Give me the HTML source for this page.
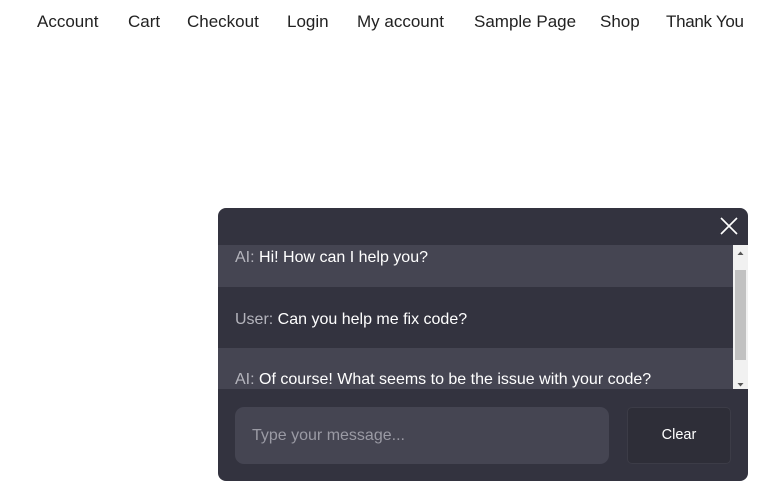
<!DOCTYPE html>
<html><head><style>
body{margin:0;width:768px;height:489px;background:#fff;position:relative;overflow:hidden;font-family:"Liberation Sans",sans-serif}
.n{position:absolute;top:12px;font-size:17px;color:#222;white-space:nowrap}
.p{position:absolute;left:218px;top:208px;width:530px;height:273px;background:#33333f;border-radius:8px;overflow:hidden}
.r{position:absolute;left:0;width:515px;font-size:16px;color:#fff;padding-left:17px;box-sizing:border-box}
.r span{color:#b4b4bc}
.sb{position:absolute;left:515px;top:37px;width:15px;height:144px;background:#f1f1f1}
.th{position:absolute;left:517px;top:62px;width:11px;height:90px;background:#c1c1c1}
</style></head><body>
<div class="n" style="left:37px">Account</div>
<div class="n" style="left:128px">Cart</div>
<div class="n" style="left:187px">Checkout</div>
<div class="n" style="left:287px">Login</div>
<div class="n" style="left:357px">My account</div>
<div class="n" style="left:474px">Sample Page</div>
<div class="n" style="left:600px">Shop</div>
<div class="n" style="left:666px;letter-spacing:-0.3px">Thank You</div>
<div class="p">
<svg style="position:absolute;left:502px;top:9px" width="18" height="18"><path d="M1 1L17 17M17 1L1 17" stroke="#fff" stroke-width="1.6"/></svg>
<div class="r" style="top:37px;height:42px;background:#454552;line-height:26px"><span>AI:</span> Hi! How can I help you?</div>
<div class="r" style="top:79px;height:61px;background:#33333f;line-height:66px"><span>User:</span> Can you help me fix code?</div>
<div class="r" style="top:140px;height:41px;background:#454552;line-height:64px;overflow:hidden"><span>AI:</span> Of course! What seems to be the issue with your code?</div>
<div class="sb"></div><div class="th"></div>
<svg style="position:absolute;left:518px;top:42px" width="9" height="140"><path d="M1.5 5L4.5 1.5 7.5 5Z" fill="#555"/><path d="M1.5 133L4.5 136.5 7.5 133Z" fill="#555"/></svg>
<div style="position:absolute;left:17px;top:199px;width:374px;height:57px;background:#454552;border-radius:9px;color:#9a9aa4;font-size:16px;line-height:57px;padding-left:17px;box-sizing:border-box">Type your message...</div>
<div style="position:absolute;left:409px;top:199px;width:104px;height:57px;background:#2e2e38;border:1px solid #3c3c47;border-radius:5px;box-sizing:border-box;color:#fff;font-size:14.5px;line-height:55px;text-align:center">Clear</div>
</div>
</body></html>
